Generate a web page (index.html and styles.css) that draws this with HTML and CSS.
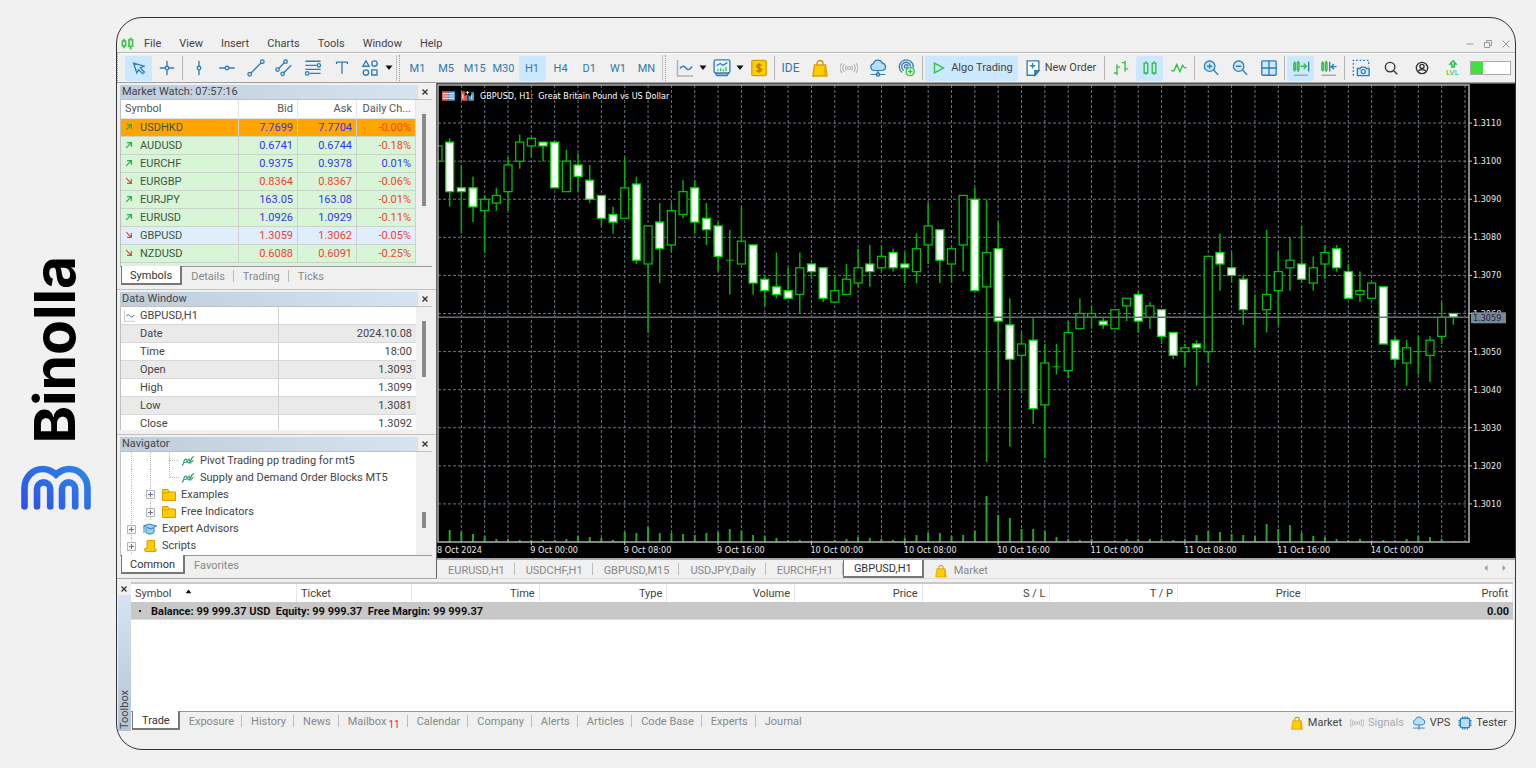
FILE: index.html
```html
<!DOCTYPE html>
<html lang="en">

<head>
    <meta charset="UTF-8">
    <meta name="viewport" content="width=device-width, initial-scale=1.0">
    <title>Binolla - GBPUSD,H1</title>
    <link rel="stylesheet" href="styles.css">
</head>

<body>
    <!-- Shared icons -->
    <svg class="sprite" aria-hidden="true">
        <symbol id="i-bag" viewBox="0 0 16 18">
            <path d="M5 7V4.500a3 3 0 0 1 6 0V7" fill="none" stroke="#c98f00" stroke-width="1.300" />
            <path d="M2.500 6h11L15 17H1z" fill="#fc0" stroke="#dba100" />
            <path d="M12 6.500h1.500L14.500 16.500h-2.500z" fill="#f0ae00" stroke="none" />
        </symbol>
        <symbol id="i-cloud" viewBox="0 0 18 18">
            <path d="M5 11.500a3.500 3.500 0 0 1-.5-6.900 4.600 4.600 0 0 1 8.800-.4A3.700 3.700 0 0 1 13.500 11.500z" fill="#b5deff" stroke="#2f7fb8" stroke-width="1.200" />
            <path d="M9 11.500v3M1.500 15.500h5.500m4 0h5.500" stroke="#2f7fb8" stroke-width="1.200" />
            <circle cx="9" cy="15.500" r="1.600" fill="#b5deff" stroke="#2f7fb8" />
        </symbol>
        <symbol id="i-signal" viewBox="0 0 18 18">
            <g fill="none" stroke="#b5b5b5" stroke-width="1.200">
                <circle cx="9" cy="9" r="1.500" />
                <path d="M6.500 6.500a4 4 0 0 0 0 5M11.500 6.500a4 4 0 0 1 0 5M4.300 5a6.500 6.500 0 0 0 0 8M13.700 5a6.500 6.500 0 0 1 0 8M2 4a8 8 0 0 0 0 10M16 4a8 8 0 0 1 0 10" />
            </g>
        </symbol>
        <symbol id="i-up" viewBox="0 0 10 10">
            <path d="M1.500 8.500 7.500 2.500M2.500 2h5.500v5.500" fill="none" stroke="#22b14c" stroke-width="1.500" />
        </symbol>
        <symbol id="i-down" viewBox="0 0 10 10">
            <path d="M1.500 1.500 7.500 7.500M2.500 8h5.500V2.500" fill="none" stroke="#e04848" stroke-width="1.500" />
        </symbol>
        <symbol id="i-line" viewBox="0 0 18 18">
            <path d="M1.500 1v16H17" fill="none" stroke="#b0b0b0" />
            <path d="M4 9.500C6 6.500 8 6.500 10 9s3.500 2 6-1.500" fill="none" stroke="#2f7fb8" stroke-width="1.500" />
        </symbol>
        <symbol id="i-indicator" viewBox="0 0 14 12">
            <path d="M1 10.500C3 10 2.500 4 4.500 4s1.500 4 3.500 4 1.500-6 5-6.500" fill="none" stroke="#2f7fb8" stroke-width="1.200" />
            <path d="M2 7.500h3l3-3.500 1.500 4L12.500 5" fill="none" stroke="#3cc04a" stroke-width="1.200" />
        </symbol>
        <symbol id="i-folder" viewBox="0 0 14 12">
            <path d="M.5 11.500V.5H6L7.500 3h6v8.500z" fill="#fc0" stroke="#d99b00" />
            <path d="M1 4h5l1.500-1" fill="none" stroke="#d99b00" />
        </symbol>
        <symbol id="i-plus" viewBox="0 0 9 9">
            <path d="M.5.5h8v8h-8z" fill="#f8f8f8" stroke="#b5b5b5" />
            <path d="M2 4.500h5M4.500 2v5" stroke="#66789a" />
        </symbol>
        <symbol id="i-close" viewBox="0 0 8 8">
            <path d="M1.500 1.500 6.500 6.500M6.500 1.500 1.500 6.500" stroke="#333" stroke-width="1.300" />
        </symbol>
        <symbol id="i-caret" viewBox="0 0 8 6">
            <path d="M.5.5h7L4 5z" fill="#111" />
        </symbol>
    </svg>

    <aside class="brand">
        <span class="brand-name">Binolla</span>
        <svg class="brand-logo" viewBox="0 0 70 45" role="img" aria-label="Binolla logo">
            <defs>
                <linearGradient id="logo" gradientUnits="userSpaceOnUse" x1="15" y1="45" x2="50" y2="0">
                    <stop offset="0" stop-color="#2f55e8" />
                    <stop offset="1" stop-color="#2b80e4" />
                </linearGradient>
            </defs>
            <g fill="none" stroke="url(#logo)" stroke-width="6.600" stroke-linecap="round">
                <path d="M3.500 41.500V23C3.500 12 12 4 22 4c5 0 9 2 13 5.500C39 6 43 4 48 4c10 0 18.500 8 18.500 19v18.500" />
                <path d="M16 41.500V24a6.600 6.600 0 0 1 13.200 0v17.500M41 41.500V24a6.600 6.600 0 0 1 13.200 0v17.500" />
            </g>
        </svg>
    </aside>

    <main class="window">
        <!-- Menu bar -->
        <header class="menu-bar">
            <svg class="app-icon" viewBox="0 0 14 14" aria-hidden="true">
                <path d="M1.500 4.500h3.500v5H1.500zM8.500 3h4v7h-4zM3.200 2v2.500m0 5V12M10.500 .5V3m0 7v3.500" fill="none" stroke="#3cc84a" stroke-width="1.800" />
            </svg>
            <nav class="menu">
                <button>File</button>
                <button>View</button>
                <button>Insert</button>
                <button>Charts</button>
                <button>Tools</button>
                <button>Window</button>
                <button>Help</button>
            </nav>
            <div class="window-controls">
                <button aria-label="Minimize"><svg viewBox="0 0 10 10"><path d="M1.500 5h7" /></svg></button>
                <button aria-label="Restore"><svg viewBox="0 0 10 10"><path d="M1.500 3.500h5v5h-5zM3.500 3.500v-2h5v5h-2" /></svg></button>
                <button aria-label="Close"><svg viewBox="0 0 10 10"><path d="M1.500 1.500l7 7m0-7l-7 7" /></svg></button>
            </div>
        </header>

        <!-- Toolbar -->
        <div class="toolbar">
            <div class="tools tools-2">
                <button class="tool active" aria-label="Cursor"><svg viewBox="0 0 20 20"><path d="M4 4.500 15.500 8l-4 2 4.500 4.500-1.800 1.800L9.500 12 7.500 15.500z" fill="none" /></svg></button>
                <button class="tool" aria-label="Crosshair"><svg viewBox="0 0 20 20"><path d="M10 2v6m0 4v6M2 10H8m4 0h6" /><circle cx="10" cy="10" r="2" fill="none" /></svg></button>
            </div>
            <i class="sep"></i>
            <div class="tools tools-7">
                <button class="tool" aria-label="Vertical line"><svg viewBox="0 0 20 20"><path d="M10 2v6m0 4v6" /><circle cx="10" cy="10" r="2" fill="none" /></svg></button>
                <button class="tool" aria-label="Horizontal line"><svg viewBox="0 0 20 20"><path d="M1.500 10H8m4 0h6.500" /><circle cx="10" cy="10" r="2" fill="none" /></svg></button>
                <button class="tool" aria-label="Trendline"><svg viewBox="0 0 20 20"><path d="M4.500 15.500l11-11" /><circle cx="3" cy="17" r="2" fill="none" /><circle cx="17" cy="3" r="2" fill="none" /></svg></button>
                <button class="tool" aria-label="Channel"><svg viewBox="0 0 20 20"><path d="M4 10.500l6.500-6.500M9.500 15.500 18 7" /><circle cx="2.800" cy="11.800" r="1.900" fill="none" /><circle cx="11.800" cy="3" r="1.900" fill="none" /><circle cx="8.500" cy="16.500" r="1.900" fill="none" /></svg></button>
                <button class="tool" aria-label="Fibonacci"><svg viewBox="0 0 20 20"><path d="M1.500 2.500h17M1.500 7H14m-12.500 4.500h17M6 16h12.500" /><circle cx="16.500" cy="7" r="1.900" fill="none" /><circle cx="3.500" cy="16" r="1.900" fill="none" /></svg></button>
                <button class="tool" aria-label="Text"><svg viewBox="0 0 20 20"><path d="M4 5.500V3.500h12v2M10 3.500V16.500" fill="none" /></svg></button>
                <button class="tool" aria-label="Shapes"><svg viewBox="0 0 20 20"><path d="M2 8h7L5.500 2zM12 12h5.800v5.800H12z" fill="none" /><circle cx="15" cy="5" r="3" fill="none" /><circle cx="5.500" cy="15" r="3" fill="none" /></svg></button>
            </div>
            <button class="caret" aria-label="More shapes"><svg><use href="#i-caret" /></svg></button>
            <i class="grip"></i>
            <div class="tools tools-9">
                <button class="tool">M1</button>
                <button class="tool">M5</button>
                <button class="tool">M15</button>
                <button class="tool">M30</button>
                <button class="tool active">H1</button>
                <button class="tool">H4</button>
                <button class="tool">D1</button>
                <button class="tool">W1</button>
                <button class="tool">MN</button>
            </div>
            <i class="grip"></i>
            <button class="tool" aria-label="Line chart"><svg><use href="#i-line" /></svg></button>
            <button class="caret" aria-label="Chart types"><svg><use href="#i-caret" /></svg></button>
            <button class="tool" aria-label="Indicators">
                <svg viewBox="0 0 20 20">
                    <path d="M2 14.500 4.500 18.500h11l2.500-4" fill="#9cb8c8" />
                    <rect x="1.200" y="1" width="17.600" height="14.500" rx="2" fill="#eaf6ff" />
                    <path d="M4 7.500l4-2.500 3 2 5-3" fill="none" />
                    <path d="M5.500 13.500v-2m3 2V10m3 3.500v-2m3 2V9" stroke="#3cc84a" />
                </svg>
            </button>
            <button class="caret" aria-label="Indicator list"><svg><use href="#i-caret" /></svg></button>
            <button class="tool" aria-label="Symbols">
                <svg viewBox="0 0 20 20">
                    <rect x="2" y="1.500" width="16" height="17" rx="1.500" fill="#fc0" stroke="#dba100" />
                    <path d="M12.800 7.500C12.500 6 7.500 5.500 7.500 8s5.300 1.500 5.300 4-5 2-5.500.5M10 4.500v11" fill="none" stroke="#b07800" />
                </svg>
            </button>
            <i class="sep"></i>
            <div class="tools tools-5">
                <button class="tool ide">IDE</button>
                <button class="tool" aria-label="Market"><svg><use href="#i-bag" /></svg></button>
                <button class="tool" aria-label="Signals"><svg><use href="#i-signal" /></svg></button>
                <button class="tool" aria-label="VPS"><svg><use href="#i-cloud" /></svg></button>
                <button class="tool" aria-label="Community">
                    <svg viewBox="0 0 20 20">
                        <path d="M4.500 15A7.800 7.800 0 1 1 17 9.500M6.500 13a5 5 0 1 1 7.500-4.500M8.500 10.500a2.200 2.200 0 1 1 3-2.500M10 8v9" fill="none" />
                        <circle cx="13.500" cy="14" r="4.500" fill="#e8ffe8" stroke="#2fbf45" />
                        <path d="M13.500 11.500v5M11 14h5" stroke="#2fbf45" stroke-width="1.500" />
                    </svg>
                </button>
            </div>
            <i class="sep"></i>
            <button class="tool tool-text active">
                <svg viewBox="0 0 20 20"><path d="M5 4.500 15 10 5 15.500z" fill="none" stroke="#2fbf45" /></svg>
                Algo Trading
            </button>
            <button class="tool tool-text">
                <svg viewBox="0 0 20 20"><path d="M3.500 2h13v11l-4 5h-9z" fill="#fff" /><path d="M12 18v-5h4.500z" fill="#2f7fb8" /><path d="M9.500 4.500v6M6.500 7.500h6" /></svg>
                New Order
            </button>
            <i class="sep"></i>
            <div class="tools tools-3">
                <button class="tool" aria-label="Bar chart"><svg viewBox="0 0 20 20" class="green"><path d="M5.500 6v12M2 15.500h3.500m0-6.500h3.500M14.500 2v12M11 4h3.500m0 7h3.500" /></svg></button>
                <button class="tool active" aria-label="Candlesticks"><svg viewBox="0 0 20 20" class="green"><path d="M3.500 4.500h4v11h-4zM12.500 4.500h4v11h-4zM5.500 2.500v2m0 11v2m9-15v2m0 11v2" fill="none" /></svg></button>
                <button class="tool" aria-label="Line"><svg viewBox="0 0 20 20" class="green"><path d="M1.500 13h3l3-7 3.500 8 3-7 2 2.500h2.500" fill="none" /></svg></button>
            </div>
            <i class="sep"></i>
            <div class="tools tools-3">
                <button class="tool" aria-label="Zoom in"><svg viewBox="0 0 20 20"><circle cx="8.500" cy="8" r="5.800" fill="#cfe8fd" /><path d="M12.800 12.300 18 17.500M5.500 8h6m-3-3v6" /></svg></button>
                <button class="tool" aria-label="Zoom out"><svg viewBox="0 0 20 20"><circle cx="8.500" cy="8" r="5.800" fill="#cfe8fd" /><path d="M12.800 12.300 18 17.500M5.500 8h6" /></svg></button>
                <button class="tool" aria-label="Tile windows"><svg viewBox="0 0 20 20"><rect x="2" y="2" width="16" height="16" rx="1" fill="#cfe8fd" /><path d="M10 2v16M2 10h16" /></svg></button>
            </div>
            <i class="sep"></i>
            <div class="tools tools-2">
                <button class="tool active" aria-label="Auto scroll"><svg viewBox="0 0 20 20"><path d="M2 5h1.800v7H2zM6 4h1.800v8H6zM2.900 2.500V5m0 7v2M6.900 2v2m0 8v2.500M9.500 8h6m-2.500-3 3 3-3 3" class="green" fill="none" /><path d="M18.500 3v11" /><path d="M2 18h16" stroke="#aaa" /></svg></button>
                <button class="tool" aria-label="Chart shift"><svg viewBox="0 0 20 20"><path d="M2 5h1.800v7H2zM6 4h1.800v8H6zM2.900 2.500V5m0 7v2M6.900 2v2m0 8v2.500" class="green" fill="none" /><path d="M10.800 3v11M18.500 8.500H13m2.500-3-3 3 3 3" fill="none" /><path d="M2 18h16" stroke="#aaa" /></svg></button>
            </div>
            <i class="sep"></i>
            <button class="tool" aria-label="Screenshot"><svg viewBox="0 0 20 20"><path d="M1.500 18.500v-17h17V8" fill="none" stroke-dasharray="2 2" /><path d="M6 18.500v-8h3L10.500 9h4L16 10.500h3v8z" fill="#cfe8fd" /><circle cx="12.500" cy="14" r="2.200" fill="#fff" /></svg></button>
            <div class="tools-end">
                <button class="tool" aria-label="Search"><svg viewBox="0 0 20 20" class="dark"><circle cx="9" cy="9" r="5.300" fill="none" /><path d="M13 13 17 17" /></svg></button>
                <button class="tool" aria-label="Account"><svg viewBox="0 0 20 20" class="dark"><circle cx="10" cy="10" r="6.300" fill="none" /><circle cx="10" cy="8.300" r="2.300" fill="none" /><path d="M5.500 14c1-3 8-3 9 0" fill="none" /></svg></button>
                <button class="tool level"><svg viewBox="0 0 12 8" class="green" aria-hidden="true"><path d="M6 .8 9 4H7.200v3H4.800V4H3z" fill="none" /></svg>LVL</button>
                <span class="battery"></span>
            </div>
        </div>

        <div class="workspace">
            <div class="docks">
                <!-- Market Watch -->
                <section class="panel">
                    <header class="panel-title"><h2>Market Watch: 07:57:16</h2><button aria-label="Close"><svg><use href="#i-close" /></svg></button></header>
                    <div class="panel-body market-body">
                        <table class="watch">
                            <colgroup><col><col class="w-price"><col class="w-price"><col class="w-price"></colgroup>
                            <thead>
                                <tr><th>Symbol</th><th>Bid</th><th>Ask</th><th>Daily Ch...</th></tr>
                            </thead>
                            <tbody>
                                <tr class="hot"><td><svg><use href="#i-up" /></svg>USDHKD</td><td class="up">7.7699</td><td class="up">7.7704</td><td class="down">-0.00%</td></tr>
                                <tr><td><svg><use href="#i-up" /></svg>AUDUSD</td><td class="up">0.6741</td><td class="up">0.6744</td><td class="down">-0.18%</td></tr>
                                <tr><td><svg><use href="#i-up" /></svg>EURCHF</td><td class="up">0.9375</td><td class="up">0.9378</td><td class="up">0.01%</td></tr>
                                <tr><td><svg><use href="#i-down" /></svg>EURGBP</td><td class="down">0.8364</td><td class="down">0.8367</td><td class="down">-0.06%</td></tr>
                                <tr><td><svg><use href="#i-up" /></svg>EURJPY</td><td class="up">163.05</td><td class="up">163.08</td><td class="down">-0.01%</td></tr>
                                <tr><td><svg><use href="#i-up" /></svg>EURUSD</td><td class="up">1.0926</td><td class="up">1.0929</td><td class="down">-0.11%</td></tr>
                                <tr class="selected"><td><svg><use href="#i-down" /></svg>GBPUSD</td><td class="down">1.3059</td><td class="down">1.3062</td><td class="down">-0.05%</td></tr>
                                <tr><td><svg><use href="#i-down" /></svg>NZDUSD</td><td class="down">0.6088</td><td class="down">0.6091</td><td class="down">-0.25%</td></tr>
                            </tbody>
                        </table>
                        <div class="scroll"><i class="thumb thumb-market"></i></div>
                    </div>
                    <nav class="tabs">
                        <button class="active">Symbols</button>
                        <button>Details</button>
                        <button>Trading</button>
                        <button>Ticks</button>
                    </nav>
                </section>

                <!-- Data Window -->
                <section class="panel">
                    <header class="panel-title"><h2>Data Window</h2><button aria-label="Close"><svg><use href="#i-close" /></svg></button></header>
                    <div class="panel-body data-body">
                        <table class="data">
                            <tbody>
                                <tr><th><svg><use href="#i-line" /></svg>GBPUSD,H1</th><td></td></tr>
                                <tr><th>Date</th><td>2024.10.08</td></tr>
                                <tr><th>Time</th><td>18:00</td></tr>
                                <tr><th>Open</th><td>1.3093</td></tr>
                                <tr><th>High</th><td>1.3099</td></tr>
                                <tr><th>Low</th><td>1.3081</td></tr>
                                <tr><th>Close</th><td>1.3092</td></tr>
                            </tbody>
                        </table>
                        <div class="scroll"><i class="thumb thumb-data"></i></div>
                    </div>
                </section>

                <!-- Navigator -->
                <section class="panel panel-fill">
                    <header class="panel-title"><h2>Navigator</h2><button aria-label="Close"><svg><use href="#i-close" /></svg></button></header>
                    <div class="panel-body nav-body">
                        <ul class="tree">
                            <li class="level-3"><svg class="ind"><use href="#i-indicator" /></svg>Pivot Trading pp trading for mt5</li>
                            <li class="level-3"><svg class="ind"><use href="#i-indicator" /></svg>Supply and Demand Order Blocks MT5</li>
                            <li class="level-2"><svg class="plus"><use href="#i-plus" /></svg><svg class="ind"><use href="#i-folder" /></svg>Examples</li>
                            <li class="level-2"><svg class="plus"><use href="#i-plus" /></svg><svg class="ind"><use href="#i-folder" /></svg>Free Indicators</li>
                            <li class="level-1"><svg class="plus"><use href="#i-plus" /></svg><svg class="ind" viewBox="0 0 14 12"><path d="M3 5v4.500c2 2 6 2 8 0V5" fill="#9ad0f5" stroke="#2f7fb8" /><path d="M.5 3 6 1l7.500 2L8 6z" fill="#9ad0f5" stroke="#2f7fb8" /><path d="M1 3.500V10" stroke="#2f7fb8" /></svg>Expert Advisors</li>
                            <li class="level-1"><svg class="plus"><use href="#i-plus" /></svg><svg class="ind" viewBox="0 0 14 12"><path d="M4 .5h7.500V9H13v2.500H3C1 11.500 1 9 2 8.500h2z" fill="#fc0" stroke="#dba100" /></svg>Scripts</li>
                        </ul>
                        <div class="scroll"><i class="thumb thumb-nav"></i></div>
                    </div>
                    <nav class="tabs">
                        <button class="active">Common</button>
                        <button>Favorites</button>
                    </nav>
                </section>
            </div>

            <!-- Chart -->
            <section class="chart-area">
                <div class="chart">
                    <svg id="chart" role="img" aria-label="GBPUSD H1 candlestick chart"></svg>
                    <div class="chart-title">
                        <svg viewBox="0 0 14 10" aria-hidden="true"><path d="M0 0h7v10H0z" fill="#e0584f" /><path d="M7 0h7v10H7z" fill="#4a9be0" /><path d="M1 2.500h12M1 5h12M1 7.500h12" stroke="#fff" /></svg>
                        <svg viewBox="0 0 14 10" aria-hidden="true"><path d="M0 0h4v5l3-2v7H0z" fill="#e0584f" /><path d="M14 1h-3v5L8 4v6h6z" fill="#4a9be0" /><path d="M5 1h4M7 0v3M2 3v5M11.500 4v4" stroke="#fff" /></svg>
                        <span>GBPUSD, H1:&nbsp; Great Britain Pound vs US Dollar</span>
                    </div>
                </div>
                <nav class="tabs chart-tabs">
                    <button>EURUSD,H1</button>
                    <button>USDCHF,H1</button>
                    <button>GBPUSD,M15</button>
                    <button>USDJPY,Daily</button>
                    <button>EURCHF,H1</button>
                    <button class="active">GBPUSD,H1</button>
                    <button class="market-tab"><svg><use href="#i-bag" /></svg>Market</button>
                    <div class="pager">
                        <button aria-label="Previous charts"><svg viewBox="0 0 6 8"><path d="M4.500 1v6L1.500 4z" fill="#999" /></svg></button>
                        <button aria-label="Next charts"><svg viewBox="0 0 6 8"><path d="M1.500 1v6l3-3z" fill="#999" /></svg></button>
                    </div>
                </nav>
            </section>
        </div>

        <!-- Toolbox -->
        <section class="toolbox">
            <div class="toolbox-side">
                <button aria-label="Close"><svg><use href="#i-close" /></svg></button>
                <h2>Toolbox</h2>
            </div>
            <div class="toolbox-main">
                <div class="trades-wrap">
                    <table class="trades">
                        <colgroup><col class="c-symbol"><col class="c-ticket"><col><col><col><col><col><col><col><col class="c-profit"></colgroup>
                        <thead>
                            <tr>
                                <th>Symbol <svg viewBox="0 0 8 6"><path d="M.5 5h7L4 .5z" fill="#111" /></svg></th>
                                <th>Ticket</th><th>Time</th><th>Type</th><th>Volume</th><th>Price</th><th>S / L</th><th>T / P</th><th>Price</th><th>Profit</th>
                            </tr>
                        </thead>
                        <tbody>
                            <tr>
                                <td colspan="9"><i class="dot"></i>Balance: 99 999.37 USD&nbsp; Equity: 99 999.37&nbsp; Free Margin: 99 999.37</td>
                                <td>0.00</td>
                            </tr>
                        </tbody>
                    </table>
                </div>
                <div class="toolbox-foot">
                    <nav class="tabs">
                        <button class="active">Trade</button>
                        <button>Exposure</button>
                        <button>History</button>
                        <button>News</button>
                        <button>Mailbox<span class="count">11</span></button>
                        <button>Calendar</button>
                        <button>Company</button>
                        <button>Alerts</button>
                        <button>Articles</button>
                        <button>Code Base</button>
                        <button>Experts</button>
                        <button>Journal</button>
                    </nav>
                    <div class="services">
                        <button><svg><use href="#i-bag" /></svg>Market</button>
                        <button class="off"><svg><use href="#i-signal" /></svg>Signals</button>
                        <button><svg><use href="#i-cloud" /></svg>VPS</button>
                        <button><svg viewBox="0 0 18 18"><rect x="3" y="3" width="12" height="12" rx="2" fill="#b5deff" stroke="#2f7fb8" stroke-width="1.800" /><path d="M6 .5v2m3-2v2m3-2v2m-6 13v2m3-2v2m3-2v2M.5 6h2m-2 3h2m-2 3h2m13-6h2m-2 3h2m-2 3h2" stroke="#2f7fb8" stroke-width="1.500" /></svg>Tester</button>
                    </div>
                </div>
            </div>
        </section>
    </main>

    <script src="chart.js"></script>
</body>

</html>
```

FILE: styles.css
```css
* {
    box-sizing: border-box;
}

body {
    margin: 0;
    height: 100vh;
    display: flex;
    background-color: #f1f1f1;
    color: #444;
    font-family: Roboto, "Open Sans", sans-serif;
    font-size: 11px;
    line-height: 14px;
}

button {
    margin: 0;
    padding: 0;
    border: none;
    background: none;
    color: inherit;
    font: inherit;
    white-space: nowrap;
    cursor: pointer;
}

h2 {
    margin: 0;
    font-size: 11px;
    font-weight: normal;
}

table {
    border-collapse: separate;
    border-spacing: 0;
    table-layout: fixed;
}

th {
    font-weight: normal;
}

svg {
    flex: none;
}

.sprite {
    position: absolute;
    width: 0;
    height: 0;
}

/* Brand */
.brand {
    flex: none;
    width: 116px;
    padding-right: 4px;
    padding-bottom: 2px;
    display: flex;
    flex-direction: column;
    align-items: center;
    justify-content: center;
    gap: 22px;
}

.brand-name {
    writing-mode: vertical-rl;
    transform: rotate(180deg);
    padding-left: 3px;
    font-family: Inter, sans-serif;
    font-size: 57px;
    line-height: 62px;
    font-weight: 700;
    color: #000;
}

.brand-logo {
    width: 70px;
    height: 45px;
}

/* Window */
.window {
    flex: 1;
    min-width: 0;
    margin: 17px 20px 18px 0;
    padding: 17px 0 18px;
    display: flex;
    flex-direction: column;
    border: 1px solid #333;
    border-radius: 26px;
    background-color: #f0f0f0;
    overflow: hidden;
}

.menu-bar {
    display: flex;
    align-items: center;
    height: 18px;
    padding: 0 4px;
    border-bottom: 1px solid #b5b5b5;
}

.app-icon {
    width: 13px;
    height: 13px;
}

.menu {
    display: flex;
    gap: 18px;
    margin-left: 10px;
}

.window-controls {
    display: flex;
    gap: 8px;
    margin-left: auto;
}

.window-controls svg {
    display: block;
    width: 10px;
    height: 10px;
    fill: none;
    stroke: #999;
}

/* Toolbar */
.toolbar {
    display: flex;
    align-items: center;
    height: 30px;
    padding: 0 4px 0 7px;
    border-top: 1px solid #fff;
    border-bottom: 1px solid #a0a0a0;
    border-left: 1px dotted #999;
}

.tools {
    flex: none;
    display: flex;
    justify-content: space-between;
}

.tools-2 {
    width: 55px;
}

.tools-3 {
    width: 85px;
}

.tools-5 {
    width: 143px;
}

.tools-7 {
    width: 199px;
}

.tools-9 {
    width: 256px;
}

.tool {
    flex: none;
    display: flex;
    align-items: center;
    justify-content: center;
    width: 27px;
    height: 25px;
    border-radius: 2px;
    color: #2f78ad;
    line-height: 16px;
}

.tool svg {
    width: 18px;
    height: 18px;
    stroke: #2f7fb8;
    stroke-width: 1.5px;
}

.tool svg.green,
.tool .green {
    stroke: #2fbf45;
}

.tool svg.dark {
    stroke: #333;
}

.tool.active {
    background-color: #cce8ff;
}

.tool.ide {
    font-size: 12px;
}

.tools-9 .tool {
    padding-top: 1px;
}

.tool-text {
    width: 93px;
    gap: 3px;
    color: #444;
}

.tool-text + .tool-text {
    width: 84px;
}

.caret {
    flex: none;
    width: 10px;
    height: 25px;
}

.caret svg {
    width: 8px;
    height: 6px;
}

.sep {
    flex: none;
    width: 1px;
    height: 24px;
    margin: 0 2px;
    background-color: #b5b5b5;
}

.grip {
    flex: none;
    width: 4px;
    height: 26px;
    margin: 0 4px 0 2px;
    border-left: 1px solid #c5c5c5;
    border-right: 1px dotted #999;
}

.grip + .tool {
    margin-left: 1px;
}

.tools-end {
    display: flex;
    align-items: center;
    gap: 4px;
    margin-left: auto;
}

.tools-end .tool.level {
    flex-direction: column;
    color: #2fbf45;
    font-size: 8px;
    line-height: 8px;
}

.tools-end .level svg {
    width: 12px;
    height: 10px;
}

.battery {
    width: 41px;
    height: 14px;
    border: 1px solid #aaa;
    background: linear-gradient(to right, #40e040 12px, #fff 12px);
}

/* Docked panels */
.workspace {
    flex: 1;
    display: flex;
    min-height: 0;
}

.docks {
    flex: none;
    width: 319px;
    display: flex;
    flex-direction: column;
    border-bottom: 1px solid #aaa;
}

.panel {
    flex: none;
    display: flex;
    flex-direction: column;
    padding: 2px 4px 4px 3px;
    border-bottom: 1px solid #c0c0c0;
}

.panel-fill {
    flex: 1;
    border-bottom: none;
}

.panel-title {
    display: flex;
    align-items: center;
    height: 14px;
}

.panel-title h2 {
    flex: 1;
    padding-left: 2px;
    background: linear-gradient(to right, #bfcddb, #d6e4f2);
}

.panel-title button {
    width: 14px;
    line-height: 0;
}

.panel-title svg,
.toolbox-side svg {
    width: 8px;
    height: 8px;
}

.panel-body {
    display: flex;
    overflow: hidden;
    border-top: 1px solid #c0c0c0;
    border-left: 1px solid #c0c0c0;
    background-color: #fff;
}

.market-body {
    height: 167px;
    background-color: #d8f5d8;
}

.data-body {
    height: 124px;
}

.nav-body {
    flex: 1;
}

.scroll {
    flex: none;
    width: 16px;
    display: flex;
    justify-content: center;
    background-color: #f0f0f0;
}

.thumb {
    width: 4px;
    background-color: #8a8a8a;
}

.thumb-market {
    height: 92px;
    margin-top: 14px;
}

.thumb-data {
    height: 56px;
    margin-top: 14px;
}

.thumb-nav {
    height: 16px;
    margin-top: 60px;
}

.watch,
.data {
    flex: 1;
    align-self: flex-start;
}

.watch td,
.watch th {
    height: 18px;
    padding: 0 4px 0 0;
    border-right: 1px solid #d0d0d0;
    border-bottom: 1px solid #c8d4c8;
    text-align: right;
}

.watch th {
    height: 19px;
    background-color: #fff;
    color: #555;
    border-color: #e5e5e5;
}

.watch th:first-child {
    padding-left: 4px;
    text-align: left;
}

.watch td:first-child {
    text-align: left;
    color: #3c5540;
}

.watch td svg {
    width: 8px;
    height: 8px;
    margin: 0 7px 0 4px;
}

.w-price {
    width: 59px;
}

.watch .hot {
    background-color: #ffa500;
}

.watch .selected {
    background-color: #e0eefc;
}

.watch .up {
    color: #3434f5;
}

.watch .down {
    color: #f5402f;
}

.data th,
.data td {
    height: 18px;
    padding: 0 4px 0 19px;
    border-right: 1px solid #d0d0d0;
    border-bottom: 1px solid #d8d8d8;
    text-align: left;
}

.data td {
    width: 137px;
    padding-left: 0;
    border-right: none;
    text-align: right;
}

.data tr:nth-child(even) {
    background-color: #eaeaea;
}

.data svg {
    width: 13px;
    height: 12px;
    margin-left: -17px;
    margin-right: 4px;
    vertical-align: middle;
}

.tree {
    flex: 1;
    display: grid;
    grid-auto-rows: 1fr;
    margin: 0;
    padding: 0 0 0 6px;
    list-style: none;
}

.tree li {
    display: flex;
    align-items: center;
    gap: 5px;
    background: repeating-linear-gradient(#bbb 0 1px, transparent 1px 2px) 4px 0 / 1px 100% no-repeat;
}

.tree .level-2,
.tree .level-3 {
    padding-left: 19px;
    background: repeating-linear-gradient(#bbb 0 1px, transparent 1px 2px) 4px 0 / 1px 100% no-repeat,
        repeating-linear-gradient(#bbb 0 1px, transparent 1px 2px) 23px 0 / 1px 100% no-repeat;
}

.tree .level-3 {
    padding-left: 42px;
}

.tree .level-3::before {
    content: "";
    width: 9px;
    height: 18px;
    margin-top: -18px;
    margin-right: -3px;
    border-left: 1px dotted #bbb;
    border-bottom: 1px dotted #bbb;
}

.plus {
    width: 9px;
    height: 9px;
    margin-right: 2px;
}

.ind {
    width: 14px;
    height: 12px;
}

/* Tabs */
.tabs {
    display: flex;
    align-items: flex-start;
    height: 19px;
    padding-left: 1px;
    border-top: 1px solid #999;
    color: #888;
}

.tabs > button {
    height: 18px;
    padding: 1px 9px 0;
    background: linear-gradient(#bbb, #bbb) right center / 1px 12px no-repeat;
}

.tabs > button.active {
    height: 19px;
    margin-top: -1px;
    padding: 2px 8px 0;
    background: #fff;
    border: 1px solid #777;
    border-top: none;
    border-right-width: 2px;
    border-bottom-width: 2px;
    color: #333;
}

.tabs > button:last-of-type {
    background: none;
}

/* Chart */
.chart-area {
    flex: 1;
    min-width: 0;
    display: flex;
    flex-direction: column;
    border-left: 1px solid #666;
    border-bottom: 1px solid #ddd;
}

.chart {
    position: relative;
    flex: 1;
    min-height: 0;
    border-top: 1px solid #555;
    background-color: #000;
}

.chart > svg {
    display: block;
    width: 100%;
    height: 100%;
}

.chart text {
    font-family: "DejaVu Sans Condensed", "DejaVu Sans", sans-serif;
    font-size: 9px;
    fill: #e8e8e8;
}

.chart .tag-text {
    fill: #223;
}

.chart-title {
    position: absolute;
    top: 5px;
    left: 5px;
    display: flex;
    align-items: center;
    gap: 6px;
    color: #fff;
    font-family: "DejaVu Sans Condensed", "DejaVu Sans", sans-serif;
    font-size: 9px;
}

.chart-title svg {
    width: 13px;
    height: 10px;
}

.chart-tabs {
    height: 20px;
    padding-left: 0;
    border-top: 2px solid #aaa;
}

.chart-tabs > button {
    height: 18px;
    padding: 3px 10px 0 11px;
}

.chart-tabs > button.active {
    height: 18px;
    margin-top: 0;
    padding: 2px 10px 0;
}

.chart-tabs .market-tab {
    display: flex;
    align-items: center;
    gap: 7px;
}

.market-tab svg {
    width: 12px;
    height: 14px;
}

.pager {
    display: flex;
    gap: 12px;
    margin-left: auto;
    padding: 2px 8px 0 0;
}

.pager svg {
    width: 6px;
    height: 8px;
}

/* Toolbox */
.toolbox {
    flex: none;
    display: flex;
    height: 149px;
    margin-top: 3px;
    padding-right: 2px;
}

.toolbox-side {
    flex: none;
    width: 14px;
    display: flex;
    flex-direction: column;
    align-items: center;
}

.toolbox-side button {
    height: 13px;
    line-height: 0;
}

.toolbox-side h2 {
    flex: 1;
    width: 13px;
    padding-top: 2px;
    line-height: 13px;
    writing-mode: vertical-rl;
    transform: rotate(180deg);
    background: linear-gradient(#b5c4d3, #d6e4f2);
}

.toolbox-main {
    flex: 1;
    min-width: 0;
    display: flex;
    flex-direction: column;
    border-top: 2px solid #c8c8c8;
}

.trades-wrap {
    flex: 1;
    background-color: #fff;
}

.trades {
    width: 100%;
}

.trades th,
.trades td {
    height: 18px;
    padding: 1px 4px 0;
    text-align: right;
}

.trades th {
    border-right: 1px solid #e8e8e8;
}

.trades th:nth-child(-n+2),
.trades td:first-child {
    text-align: left;
}

.trades th svg {
    width: 7px;
    height: 5px;
    margin: 0 0 3px 11px;
}

.trades td {
    padding-top: 2px;
    background-color: #c8c8c8;
    border-bottom: 1px solid #ddd;
    color: #111;
    font-weight: bold;
}

.c-symbol {
    width: 166px;
}

.c-ticket {
    width: 115px;
}

.c-profit {
    width: 15%;
}

.dot {
    display: inline-block;
    width: 2px;
    height: 2px;
    margin: 0 10px 3px 4px;
    background-color: #222;
}

.toolbox-foot {
    display: flex;
    height: 20px;
    border-top: 1px solid #999;
}

.toolbox-foot .tabs {
    border-top: none;
}

.toolbox-foot .tabs > button {
    padding: 2px 8px 0 9px;
}

.count {
    margin-left: 2px;
    color: #e23;
    font-size: 10px;
    line-height: 10px;
    vertical-align: -3px;
}

.services {
    display: flex;
    gap: 8px;
    margin-left: auto;
    padding: 3px 6px 0 0;
}

.services button {
    display: flex;
    align-items: center;
    gap: 4px;
}

.services svg {
    width: 14px;
    height: 14px;
}

.services .off {
    color: #aaa;
}
```

FILE: chart.js
```js
// Prices are points above 1.3000: [open, high, low, close, volume]
const candles = [
    [100, 104, 100, 104, 0], [105, 106, 88, 92, 12], [93, 99, 81, 92, 10], [93, 96, 84, 88, 8],
    [87, 91, 76, 90, 6], [89, 93, 87, 91, 3], [92, 101, 87, 99, 3], [100, 107, 98, 105, 2],
    [104, 106, 101, 106, 2], [105, 105, 100, 104, 2], [105, 105, 93, 93, 2], [92, 103, 92, 100, 3],
    [99, 102, 92, 96, 6], [95, 99, 89, 90, 5], [91, 91, 83, 85, 4], [86, 88, 81, 84, 2],
    [85, 101, 85, 93, 10], [94, 96, 73, 74, 9], [73, 83, 55, 83, 15], [84, 89, 68, 77, 9],
    [78, 89, 76, 87, 9], [86, 95, 85, 92, 8], [93, 95, 81, 84, 7], [85, 89, 78, 82, 9],
    [83, 84, 71, 75, 10], [74, 82, 65, 74, 13], [73, 88, 73, 79, 11], [78, 78, 65, 68, 7],
    [69, 70, 62, 66, 6], [67, 76, 64, 65, 4], [66, 72, 64, 64, 2], [65, 76, 60, 72, 2],
    [73, 73, 69, 71, 1], [72, 72, 63, 64, 1], [63, 70, 63, 66, 2], [65, 73, 65, 69, 3],
    [68, 77, 67, 72, 5], [73, 78, 67, 71, 4], [72, 78, 71, 75, 3], [76, 77, 71, 72, 2],
    [73, 76, 68, 72, 4], [71, 81, 68, 77, 7], [78, 89, 73, 83, 9], [82, 82, 68, 74, 9],
    [73, 78, 68, 77, 6], [78, 91, 71, 91, 7], [90, 93, 66, 66, 11], [67, 90, 21, 76, 46],
    [77, 84, 40, 58, 27], [57, 64, 25, 48, 24], [49, 55, 39, 52, 13], [53, 59, 31, 35, 13],
    [36, 52, 22, 47, 11], [46, 52, 44, 46, 5], [45, 58, 43, 55, 3], [56, 64, 56, 60, 2],
    [59, 62, 56, 60, 3], [58, 59, 56, 57, 1], [56, 61, 56, 61, 1], [62, 64, 58, 64, 3],
    [65, 66, 55, 58, 3], [59, 63, 56, 62, 3], [61, 61, 52, 54, 3], [55, 55, 48, 49, 2],
    [50, 52, 46, 51, 3], [52, 53, 41, 51, 7], [50, 75, 47, 75, 11], [76, 81, 66, 73, 10],
    [72, 76, 68, 70, 8], [69, 70, 57, 61, 7], [60, 65, 51, 60, 6], [61, 82, 55, 65, 18],
    [66, 76, 57, 71, 13], [72, 80, 66, 74, 17], [73, 83, 68, 69, 9], [68, 75, 66, 72, 6],
    [73, 78, 69, 76, 5], [77, 78, 71, 72, 3], [71, 73, 64, 64, 2], [65, 71, 63, 66, 3],
    [64, 68, 64, 68, 1], [67, 67, 52, 52, 2], [53, 54, 46, 48, 1], [47, 53, 41, 51, 3],
    [50, 54, 44, 50, 6], [49, 54, 42, 53, 5], [54, 63, 52, 59, 3], [60, 60, 57, 59, 1]
];

const times = ['8 Oct 2024', '9 Oct 00:00', '9 Oct 08:00', '9 Oct 16:00', '10 Oct 00:00', '10 Oct 08:00',
    '10 Oct 16:00', '11 Oct 00:00', '11 Oct 08:00', '11 Oct 16:00', '14 Oct 00:00'];

const lastPrice = 59;
const svg = document.getElementById('chart');

function add(tag, attrs, text) {
    const el = document.createElementNS('http://www.w3.org/2000/svg', tag);
    for (const key in attrs) {
        el.setAttribute(key, attrs[key]);
    }
    if (text) {
        el.textContent = text;
    }
    svg.appendChild(el);
}

function line(x1, y1, x2, y2, stroke, extra) {
    add('line', Object.assign({ x1, y1, x2, y2, stroke }, extra));
}

function draw() {
    const width = svg.clientWidth;
    const height = svg.clientHeight;
    const right = width - 46;
    const top = 1;
    const bottom = height - 16;
    const step = (right - 5) / candles.length;
    const x = i => 1 + i * step;
    const y = p => bottom - p / 120 * (bottom - top);
    const grid = { 'stroke-dasharray': '3 2' };

    svg.innerHTML = '';

    // Grid
    for (let i = 2; i <= candles.length; i += 2) {
        line(x(i), top, x(i), bottom, '#667585', grid);
    }
    for (let p = 10; p < 120; p += 10) {
        line(1, y(p), right, y(p), '#667585', grid);
        line(right, y(p), right + 3, y(p), '#ccc');
        add('text', { x: right + 4, y: y(p) + 3 }, (1.3 + p / 10000).toFixed(4));
    }

    // Volumes and candles
    candles.forEach(([open, high, low, close, volume], i) => {
        const cx = x(i);
        const bodyTop = y(Math.max(open, close));
        const bodyBottom = y(Math.min(open, close));
        line(cx, bottom - volume, cx, bottom, '#28a428', { 'stroke-width': 2 });
        line(cx, y(high), cx, bodyTop, '#00b000', { 'stroke-width': 1.5 });
        line(cx, bodyBottom, cx, y(low), '#00b000', { 'stroke-width': 1.5 });
        if (open === close) {
            line(cx - 4, bodyTop, cx + 4, bodyTop, '#00c000');
            return;
        }
        add('rect', {
            x: cx - 4,
            y: bodyTop,
            width: 8,
            height: bodyBottom - bodyTop,
            fill: close < open ? '#fff' : '#000',
            stroke: close < open ? '#00e000' : '#00c000',
            'stroke-width': 1.3
        });
    });

    // Last price
    line(1, y(lastPrice), right, y(lastPrice), '#5f7080', { 'stroke-width': 1.5 });
    add('rect', { x: right + 2, y: y(lastPrice) - 5, width: 35, height: 11, fill: '#778899' });
    add('text', { x: right + 4, y: y(lastPrice) + 4, class: 'tag-text' }, (1.3 + lastPrice / 10000).toFixed(4));

    // Frame and time scale
    add('rect', { x: 1, y: top, width: right - 1, height: bottom - top, fill: 'none', stroke: '#b0b0b0', 'stroke-width': 1.5 });
    times.forEach((label, n) => {
        if (n > 0) {
            line(x(n * 8), bottom, x(n * 8), bottom + 3, '#ccc');
        }
        add('text', { x: Math.max(0, x(n * 8) - 1), y: bottom + 11 }, label);
    });
}

draw();
window.addEventListener('resize', draw);
```
